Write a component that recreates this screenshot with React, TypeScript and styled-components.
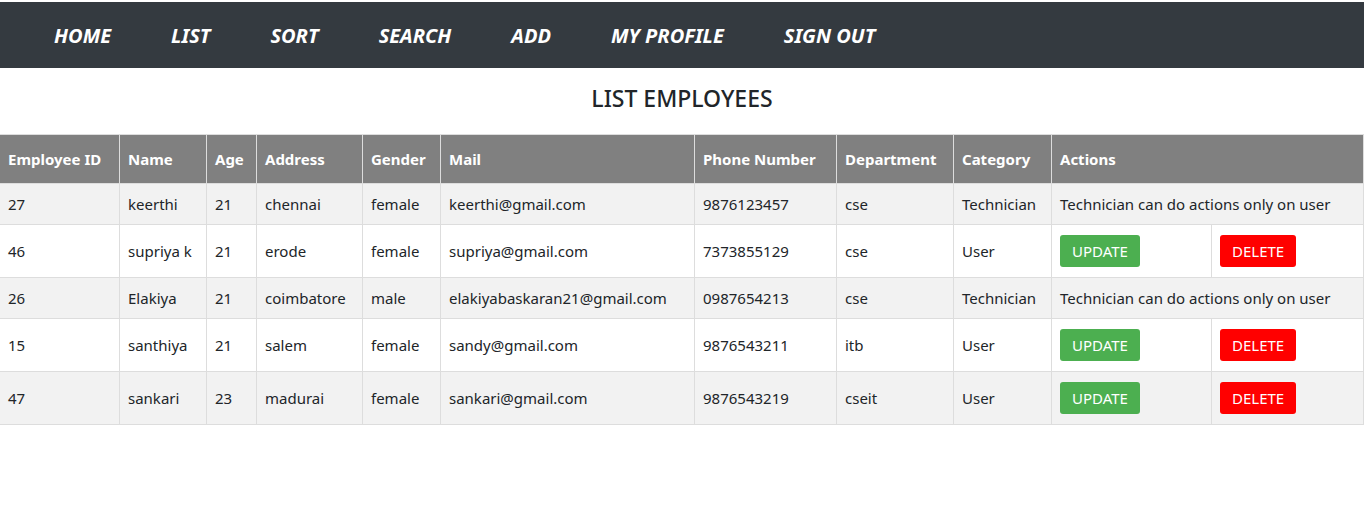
import React from "react";
import styled, { createGlobalStyle } from "styled-components";

type Employee = {
  id: number;
  name: string;
  age: number;
  address: string;
  gender: string;
  mail: string;
  phone: string;
  department: string;
  category: string;
};

const employees: Employee[] = [
  { id: 27, name: "keerthi", age: 21, address: "chennai", gender: "female", mail: "keerthi@gmail.com", phone: "9876123457", department: "cse", category: "Technician" },
  { id: 46, name: "supriya k", age: 21, address: "erode", gender: "female", mail: "supriya@gmail.com", phone: "7373855129", department: "cse", category: "User" },
  { id: 26, name: "Elakiya", age: 21, address: "coimbatore", gender: "male", mail: "elakiyabaskaran21@gmail.com", phone: "0987654213", department: "cse", category: "Technician" },
  { id: 15, name: "santhiya", age: 21, address: "salem", gender: "female", mail: "sandy@gmail.com", phone: "9876543211", department: "itb", category: "User" },
  { id: 47, name: "sankari", age: 23, address: "madurai", gender: "female", mail: "sankari@gmail.com", phone: "9876543219", department: "cseit", category: "User" },
];

const navLinks = ["HOME", "LIST", "SORT", "SEARCH", "ADD", "MY PROFILE", "SIGN OUT"];
const colWidths = [120, 87, 50, 106, 78, 254, 142, 117, 98, 160, 152];
const headers = ["Employee ID", "Name", "Age", "Address", "Gender", "Mail", "Phone Number", "Department", "Category"];

const GlobalStyle = createGlobalStyle`
  body {
    margin: 0;
    background: #fff;
    font-family: "Noto Sans", "Open Sans", sans-serif;
    color: #212529;
    overflow: hidden;
  }
`;

const Page = styled.div`
  padding-top: 2px;
`;

const NavBar = styled.nav`
  display: flex;
  align-items: center;
  height: 66px;
  padding-left: 24px;
  background: #343a40;
`;

const NavLink = styled.a`
  padding: 0 30px;
  color: #fff;
  font-size: 20px;
  font-weight: 700;
  font-style: italic;
  text-decoration: none;
  cursor: pointer;
`;

const Title = styled.h2`
  margin: 0;
  padding: 14px 0 20px;
  text-align: center;
  font-size: 23px;
  font-weight: 500;
  line-height: 32px;
  color: #212529;
`;

const Table = styled.table`
  width: 1365px;
  margin-left: -1px;
  border-collapse: collapse;
  table-layout: fixed;
  font-size: 15px;
`;

const Th = styled.th`
  padding: 13px 8px;
  line-height: 22px;
  background: #808080;
  color: #fff;
  font-weight: 700;
  text-align: left;
  border: 1px solid #ddd;
  white-space: nowrap;
`;

const Row = styled.tr<{ $striped: boolean }>`
  background: ${(p) => (p.$striped ? "#f2f2f2" : "#fff")};
`;

const Td = styled.td`
  padding: 10px 8px;
  line-height: 20px;
  border: 1px solid #ddd;
  white-space: nowrap;
  color: #212529;
`;

const ActionButton = styled.button<{ $variant: "update" | "delete" }>`
  display: inline-block;
  height: 32px;
  padding: 0 12px;
  border: none;
  border-radius: 3px;
  background: ${(p) => (p.$variant === "update" ? "#4caf50" : "#ff0000")};
  color: #fff;
  font-family: inherit;
  font-size: 15px;
  line-height: 32px;
  vertical-align: middle;
  cursor: pointer;
`;

export default function App() {
  return (
    <Page>
      <GlobalStyle />
      <NavBar>
        {navLinks.map((l) => (
          <NavLink key={l}>{l}</NavLink>
        ))}
      </NavBar>
      <Title>LIST EMPLOYEES</Title>
      <Table>
        <colgroup>
          {colWidths.map((w, i) => (
            <col key={i} style={{ width: w }} />
          ))}
        </colgroup>
        <thead>
          <tr>
            {headers.map((h) => (
              <Th key={h}>{h}</Th>
            ))}
            <Th colSpan={2}>Actions</Th>
          </tr>
        </thead>
        <tbody>
          {employees.map((e, i) => (
            <Row key={e.id} $striped={i % 2 === 0}>
              <Td>{e.id}</Td>
              <Td>{e.name}</Td>
              <Td>{e.age}</Td>
              <Td>{e.address}</Td>
              <Td>{e.gender}</Td>
              <Td>{e.mail}</Td>
              <Td>{e.phone}</Td>
              <Td>{e.department}</Td>
              <Td>{e.category}</Td>
              {e.category === "Technician" ? (
                <Td colSpan={2}>Technician can do actions only on user</Td>
              ) : (
                <>
                  <Td>
                    <ActionButton $variant="update">UPDATE</ActionButton>
                  </Td>
                  <Td>
                    <ActionButton $variant="delete">DELETE</ActionButton>
                  </Td>
                </>
              )}
            </Row>
          ))}
        </tbody>
      </Table>
    </Page>
  );
}
